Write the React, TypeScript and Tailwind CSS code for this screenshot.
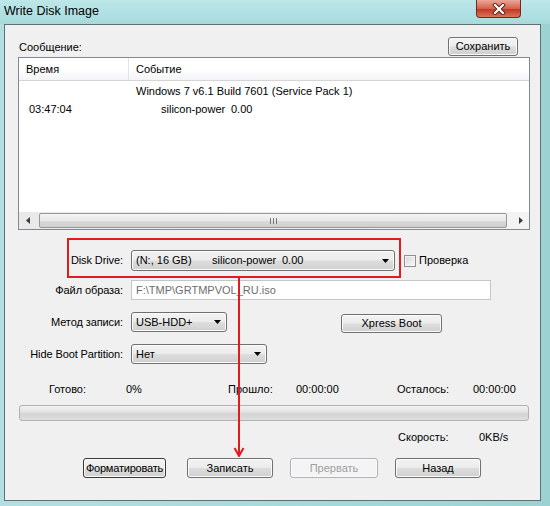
import React from 'react';

const font = { fontFamily: '"Liberation Sans", Arial, sans-serif' };

const btnBase =
  'flex items-center justify-center rounded-[3px] border text-[11px] leading-none shadow-[inset_0_0_0_1px_#fbfbfb]';
const btnNormal =
  'border-[#707070] bg-[linear-gradient(#f3f3f3,#ececec_48%,#dddddd_52%,#d0d0d0)] text-black';

function ComboArrow() {
  return (
    <svg width="7" height="4" viewBox="0 0 7 4" className="ml-auto mr-[5px] shrink-0">
      <path d="M0 0h7L3.5 4z" fill="#000" />
    </svg>
  );
}

function Combo({ width, children }: { width: string; children: React.ReactNode }) {
  return (
    <div className={`${width} h-full flex items-center rounded-[3px] border border-[#707070] bg-[linear-gradient(#f3f3f3,#ececec_48%,#dddddd_52%,#d0d0d0)] shadow-[inset_0_0_0_1px_#fbfbfb] pl-[4px] text-[11px] text-black whitespace-nowrap`}>
      {children}
      <ComboArrow />
    </div>
  );
}

function Label({ children }: { children: React.ReactNode }) {
  return <span className="w-[119px] shrink-0 text-right pr-[1px] text-[11px] text-black mr-[7px] tracking-[-0.1px]">{children}</span>;
}

export default function App() {
  return (
    <div className="w-[550px] h-[506px] flex flex-col overflow-hidden bg-[linear-gradient(90deg,#b4dfe2,#a5d8da_60%,#9dd2d3)] select-none" style={font}>
      {/* Title bar */}
      <div className="relative h-[24px] shrink-0 flex items-center pl-[4px] pb-[2px] bg-[linear-gradient(180deg,#bde7e9,#a7dadc)]">
        <span className="text-[12.5px] text-black">Write Disk Image</span>
        <div className="absolute left-[476px] top-0 w-[45px] h-[18px] rounded-b-[4px] border border-t-0 border-[#6b2b22] bg-[linear-gradient(#eba898,#d4634c_50%,#c23a22_55%,#d8745a)] flex items-center justify-center">
          <svg width="14" height="12" viewBox="0 0 14 12">
            <path d="M3 2l8 8M11 2l-8 8" stroke="#5a2018" strokeWidth="4" strokeLinecap="square" />
            <path d="M3 2l8 8M11 2l-8 8" stroke="#fff" strokeWidth="2.2" strokeLinecap="square" />
          </svg>
        </div>
      </div>

      {/* Frame + content */}
      <div className="flex-1 flex pl-[4px] pr-[9px] pb-[5px]">
        <div className="relative flex-1 flex flex-col bg-[#f0f0f0] border border-[#5e7072]">
          {/* Message header */}
          <div className="h-[31px] flex items-end pl-[14px] pr-[22px]">
            <span className="text-[11px] text-black mb-[1px]">Сообщение:</span>
            <button className={`${btnBase} ${btnNormal} ml-auto w-[70px] h-[19px]`}>Сохранить</button>
          </div>

          {/* List */}
          <div className="ml-[13px] mt-[1px] w-[512px] h-[173px] border border-[#828790] bg-white flex flex-col text-[11px] text-black">
            <div className="h-[23px] shrink-0 flex items-center border-b border-[#d5d5d5] bg-[linear-gradient(#ffffff,#ffffff_50%,#f3f4f6)]">
              <span className="w-[110px] pl-[7px] border-r border-[#e3e4e6] h-full flex items-center">Время</span>
              <span className="pl-[7px]">Событие</span>
            </div>
            <div className="h-[18px] mt-[1px] flex items-center">
              <span className="w-[117px]" />
              <span>Windows 7 v6.1 Build 7601 (Service Pack 1)</span>
            </div>
            <div className="h-[18px] flex items-center">
              <span className="w-[142px] pl-[10px]">03:47:04</span>
              <span className="w-[70px]">silicon-power</span>
              <span>0.00</span>
            </div>
            <div className="flex-1" />
            {/* Horizontal scrollbar */}
            <div className="h-[17px] shrink-0 flex items-center bg-[linear-gradient(90deg,#e9e9e9,#f3f3f3)]">
              <div className="w-[17px] h-full flex items-center justify-center">
                <svg width="4" height="7" viewBox="0 0 4 7"><path d="M4 0v7L0 3.5z" fill="#3c3c3c" /></svg>
              </div>
              <div className="ml-[3px] w-[468px] h-[15px] rounded-[2px] border border-[#979797] bg-[linear-gradient(#f5f5f5,#e8e8e8_50%,#d9d9d9_52%,#cfcfcf)] flex items-center justify-center gap-[2px]">
                <span className="w-[1px] h-[6px] bg-[#7a7a7a]" />
                <span className="w-[1px] h-[6px] bg-[#7a7a7a]" />
                <span className="w-[1px] h-[6px] bg-[#7a7a7a]" />
              </div>
              <div className="ml-auto w-[17px] h-full flex items-center justify-center">
                <svg width="4" height="7" viewBox="0 0 4 7"><path d="M0 0v7L4 3.5z" fill="#3c3c3c" /></svg>
              </div>
            </div>
          </div>

          {/* Disk drive */}
          <div className="mt-[20px] h-[21px] flex items-center">
            <Label>Disk Drive:</Label>
            <Combo width="w-[264px]">
              <span className="w-[76px]">(N:, 16 GB)</span>
              <span className="w-[70px]">silicon-power</span>
              <span>0.00</span>
            </Combo>
            <span className="ml-[9px] w-[12px] h-[12px] border border-[#8e8f8f] bg-[linear-gradient(135deg,#d8d8d8,#f8f8f8)] shadow-[inset_0_0_0_1px_#f4f4f4]" />
            <span className="ml-[3px] text-[11px] text-black">Проверка</span>
          </div>

          {/* Image file */}
          <div className="mt-[9px] h-[20px] flex items-center">
            <Label>Файл образа:</Label>
            <div className="w-[360px] h-full border border-[#c6c6c6] bg-white flex items-center pl-[4px] text-[11px] text-[#6d6d6d]">
              F:\TMP\GRTMPVOL_RU.iso
            </div>
          </div>

          {/* Write method */}
          <div className="mt-[12px] h-[20px] flex items-center">
            <Label>Метод записи:</Label>
            <Combo width="w-[96px]">
              <span>USB-HDD+</span>
            </Combo>
            <button className={`${btnBase} ${btnNormal} ml-[114px] w-[101px] h-[19px] mt-[3px]`}>Xpress Boot</button>
          </div>

          {/* Hide boot partition */}
          <div className="mt-[12px] h-[20px] flex items-center">
            <Label>Hide Boot Partition:</Label>
            <Combo width="w-[136px]">
              <span>Нет</span>
            </Combo>
          </div>

          {/* Stats */}
          <div className="mt-[18px] h-[14px] flex items-center pl-[44px] text-[11px] text-black whitespace-nowrap">
            <span className="w-[77px]">Готово:</span>
            <span className="w-[102px]">0%</span>
            <span className="w-[68px]">Прошло:</span>
            <span className="w-[101px]">00:00:00</span>
            <span className="w-[76px]">Осталось:</span>
            <span>00:00:00</span>
          </div>

          {/* Progress */}
          <div className="ml-[14px] mt-[9px] w-[510px] h-[16px] rounded-[3px] border border-[#b2b2b2] bg-[linear-gradient(#f2f2f2,#e2e2e2_45%,#d3d3d3_55%,#dedede)]" />

          {/* Speed */}
          <div className="mt-[9px] h-[14px] flex items-center pl-[393px] text-[11px] text-black">
            <span className="w-[81px]">Скорость:</span>
            <span>0KB/s</span>
          </div>

          {/* Buttons */}
          <div className="mt-[14px] h-[20px] flex items-center pl-[78px]">
            <button className={`${btnBase} border-[#3a3a3a] bg-[linear-gradient(#f3f3f3,#ececec_48%,#dddddd_52%,#d0d0d0)] text-black w-[83px] h-full tracking-[-0.2px]`}>Форматировать</button>
            <button className={`${btnBase} ${btnNormal} ml-[21px] w-[86px] h-full`}>Записать</button>
            <button className={`${btnBase} ml-[17px] w-[88px] h-full border-[#adb2b5] bg-[#f4f4f4] text-[#a0a0a0]`}>Прервать</button>
            <button className={`${btnBase} ${btnNormal} ml-[17px] w-[86px] h-full`}>Назад</button>
          </div>

          {/* Red annotation overlay */}
          <div className="absolute left-[62px] top-[213px] w-[334px] h-[40px] border-2 border-[#e01b22] pointer-events-none" />
          <div className="absolute left-[233px] top-[252px] w-[2px] h-[178px] bg-[#e01b22] pointer-events-none" />
          <svg className="absolute left-[228px] top-[420px] pointer-events-none" width="12" height="12" viewBox="0 0 12 12">
            <path d="M1.5 3L6 11L10.5 3" fill="none" stroke="#e01b22" strokeWidth="2" strokeLinejoin="miter" />
          </svg>
        </div>
      </div>
    </div>
  );
}
